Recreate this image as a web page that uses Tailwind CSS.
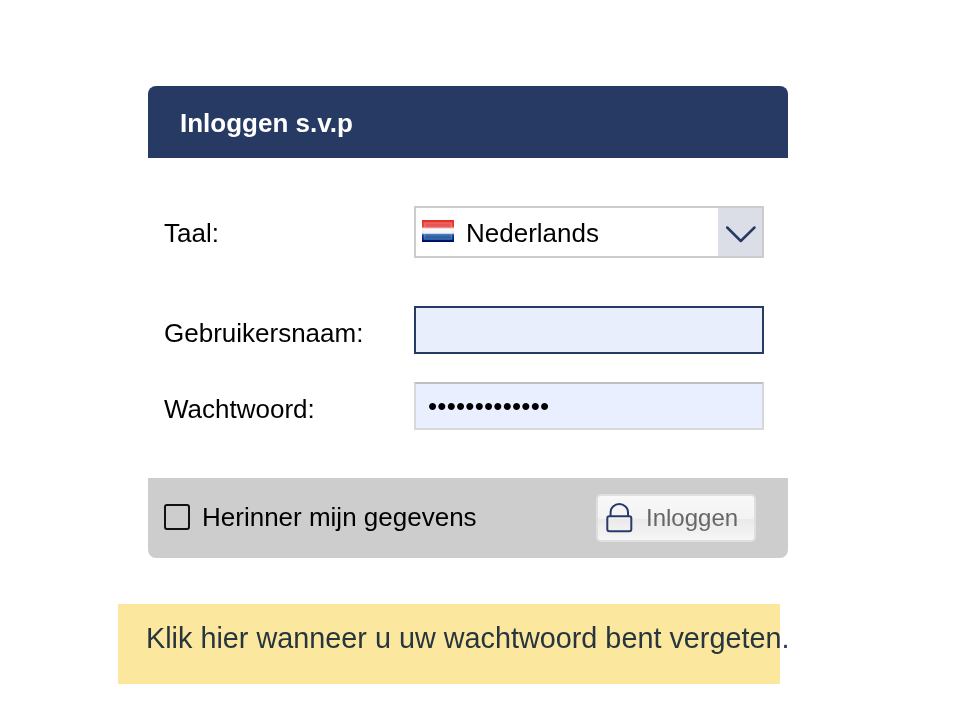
<!DOCTYPE html>
<html lang="nl">
<head>
<meta charset="utf-8">
<title>Inloggen</title>
<script src="https://cdn.jsdelivr.net/npm/@tailwindcss/browser@4"></script>
</head>
<body class="bg-white h-[704px] overflow-hidden pt-[86px] text-black text-[26px] leading-[30px] font-['Liberation_Sans',Arial,sans-serif]">
<form class="ml-[148px] w-[640px]">
  <header class="h-[72px] rounded-t-lg bg-[#273a64] pl-8 flex items-center text-white font-bold pt-[2px]"><h1>Inloggen s.v.p</h1></header>
  <div class="pt-12 pl-4 pr-6 h-[320px]">
    <div class="flex h-[52px]">
      <label class="w-[250px] pt-3">Taal:</label>
      <div class="flex flex-1 border-2 border-[#cccccc]">
        <div class="flex flex-1 pl-[6px]">
          <svg class="mt-[12px] w-8 h-[22px]" viewBox="0 0 32 22">
            <defs>
              <linearGradient id="e" x2="0" y2="1"><stop stop-color="#e4301c"/><stop offset=".3" stop-color="#e4402c"/><stop offset=".4" stop-color="#fff"/><stop offset=".6" stop-color="#e0e0ea"/><stop offset=".68" stop-color="#12388c"/><stop offset="1" stop-color="#00085f"/></linearGradient>
              <linearGradient id="r" x2="0" y2="1"><stop stop-color="#e5494a"/><stop offset=".28" stop-color="#e8605f"/><stop offset=".38" stop-color="#fafafc"/><stop offset=".62" stop-color="#f2f3f8"/><stop offset=".7" stop-color="#3c72b4"/><stop offset="1" stop-color="#1a4a98"/></linearGradient>
            </defs>
            <path fill="url(#e)" d="M0 0h32v22H0z"/>
            <path fill="url(#r)" d="M1.5 2h29v18h-29z"/>
            <path fill="none" stroke="#fff" stroke-opacity=".13" stroke-width="1.5" d="M2.7 3h26.600v16H2.700z"/>
          </svg>
          <span class="ml-3 pt-[10px]">Nederlands</span>
        </div>
        <div class="w-[44px] bg-[#dbdee7]">
          <svg class="w-[44px] h-12" viewBox="0 0 44 48" fill="none" stroke="#273a64" stroke-width="2.5" stroke-linecap="round" stroke-linejoin="round"><path d="M9.200 19.500 22.800 33 36.500 19.500"/></svg>
        </div>
      </div>
    </div>
    <div class="flex h-12 mt-12">
      <label class="w-[250px] pt-3">Gebruikersnaam:</label>
      <div class="flex-1 bg-[#e8eefc] border-2 border-[#273a64]"></div>
    </div>
    <div class="flex h-12 mt-7">
      <label class="w-[250px] pt-3">Wachtwoord:</label>
      <div class="flex-1 bg-[#e9effe] border-2 border-[#d8d8d8] border-t-[#bfbfc2] pl-3 pt-[7px] tracking-[0.23px]">•••••••••••••</div>
    </div>
  </div>
  <footer class="h-20 rounded-b-lg bg-[#cdcdcd] pl-4 pr-8 flex items-center">
    <span class="w-[26px] h-[26px] rounded-[3px] border-2 border-[#111] mt-[-2px]"></span>
    <label class="ml-3 flex-1 pb-[2px]">Herinner mijn gegevens</label>
    <button type="button" class="w-40 h-12 rounded-[5px] border-2 border-[#dfdfdf] bg-[linear-gradient(#f8f8f8,#f3f3f3_52%,#eaeaea_53%,#f6f6f6)] flex items-center pl-2 text-[24px] text-[#666]">
      <svg class="w-[27px] h-[30px] mt-[-1px]" viewBox="0 0 27 30" fill="none" stroke="#273a6a" stroke-width="2"><rect x="1.3" y="13.3" width="24" height="15" rx="2"/><path d="M4.600 13.300V9.300a8.700 8.300 0 0 1 17.400 0v4"/></svg>
      <span class="ml-[13px]">Inloggen</span>
    </button>
  </footer>
</form>
<div class="relative ml-[118px] mt-[46px] w-[662px] h-20">
  <a class="block pl-7 pt-[18px] text-[28.8px] leading-[32px] whitespace-nowrap text-[#273a64]">Klik hier wanneer u uw wachtwoord bent vergeten.</a>
  <div class="absolute inset-0 bg-[#fce79e] mix-blend-multiply"></div>
</div>
</body>
</html>
